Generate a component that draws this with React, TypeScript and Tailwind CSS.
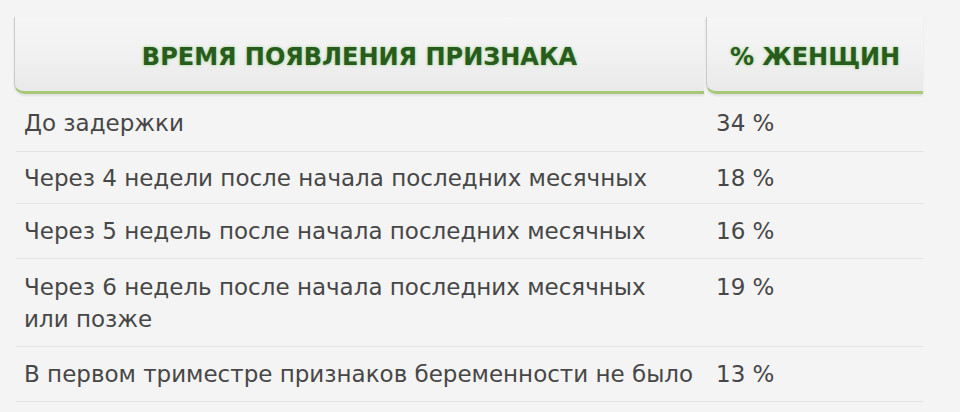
const rows = [
  { lines: ["До задержки"], value: "34 %", h: "h-[58px]" },
  { lines: ["Через 4 недели после начала последних месячных"], value: "18 %", h: "h-[52px]" },
  { lines: ["Через 5 недель после начала последних месячных"], value: "16 %", h: "h-[55px]" },
  {
    lines: ["Через 6 недель после начала последних месячных", "или позже"],
    value: "19 %",
    h: "h-[88px]",
  },
  { lines: ["В первом триместре признаков беременности не было"], value: "13 %", h: "h-[55px]" },
];

export default function App() {
  return (
    <main className="w-[960px] h-[412px] overflow-hidden bg-[#f4f4f4] pt-[17px] pl-[14px] font-['DejaVu_Sans',sans-serif] text-[#474747]">
      <div className="w-[909px]">
        <div className="grid grid-cols-[690px_217px] gap-[2px] h-[77px]">
          <HeaderCell>ВРЕМЯ ПОЯВЛЕНИЯ ПРИЗНАКА</HeaderCell>
          <HeaderCell>% ЖЕНЩИН</HeaderCell>
        </div>

        {rows.map((row) => (
          <div
            key={row.value}
            className={`grid grid-cols-[692px_217px] border-b border-[#e3e3e3] ml-[2px] ${row.h}`}
          >
            <div className="flex flex-col justify-center pl-[8px] text-[23px] leading-[32px] whitespace-nowrap">
              {row.lines.map((line) => (
                <span key={line}>{line}</span>
              ))}
            </div>
            <div className="flex items-start pl-[8px] text-[23px] leading-[32px]">
              <span className={row.lines.length > 1 ? "pt-[12px]" : "self-center"}>{row.value}</span>
            </div>
          </div>
        ))}
      </div>
    </main>
  );
}

function HeaderCell({ children }: { children: React.ReactNode }) {
  return (
    <div className="flex items-center justify-center pt-[6px] rounded-bl-[10px] border-l border-[#c9c9c9] border-b-[3px] border-b-[#a8c878] bg-gradient-to-b from-[#f6f6f6] via-[#f1f1f1] to-[#e9e9e9] shadow-[0_2px_2px_rgba(0,0,0,0.08)]">
      <span className="text-[24px] font-bold text-[#285c1d] [text-shadow:0_0_3px_rgba(110,190,80,0.7)]">
        {children}
      </span>
    </div>
  );
}
